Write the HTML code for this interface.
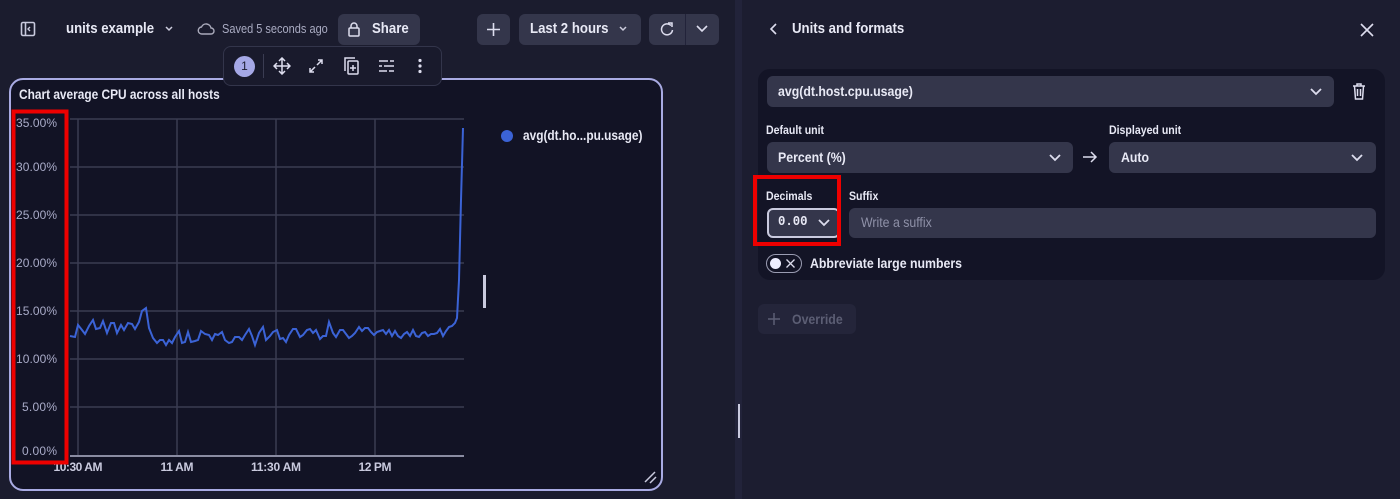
<!DOCTYPE html>
<html><head><meta charset="utf-8"><style>
*{box-sizing:border-box;margin:0;padding:0}
body{width:1400px;height:499px;background:#1b1c2e;font-family:"Liberation Sans",sans-serif;color:#e8e9f5;position:relative;overflow:hidden;font-weight:bold}
.a{position:absolute}
.btn{position:absolute;background:#34364b;border-radius:6px}
.t{position:absolute;white-space:nowrap;transform:scaleX(0.88);transform-origin:left center}
svg{position:absolute}
</style></head><body>
<!-- top bar -->
<svg style="left:20px;top:21px" width="16" height="16" viewBox="0 0 16 16"><rect x="1.5" y="1.5" width="13" height="13" rx="1.5" fill="none" stroke="#c9cade" stroke-width="1.6"/><line x1="5.5" y1="2" x2="5.5" y2="14" stroke="#c9cade" stroke-width="1.6"/><path d="M10 6l-2 2 2 2" fill="none" stroke="#c9cade" stroke-width="1.4"/></svg>
<div class="t" style="left:66px;top:20px;font-size:15px">units example</div>
<svg style="left:164px;top:25px" width="10" height="8" viewBox="0 0 10 8"><path d="M2 2l3 3 3-3" fill="none" stroke="#ccd" stroke-width="1.5"/></svg>
<svg style="left:197px;top:22px" width="18" height="14" viewBox="0 0 18 14"><path d="M5 12h9a3 3 0 0 0 0-6 5 5 0 0 0-9.5-1A3.5 3.5 0 0 0 5 12z" fill="none" stroke="#aab" stroke-width="1.4"/></svg>
<div class="t" style="left:222px;top:22px;font-size:12.5px;color:#a9abc2;font-weight:normal">Saved 5 seconds ago</div>
<div class="btn" style="left:338px;top:14px;width:82px;height:31px"></div>
<svg style="left:347px;top:22px" width="14" height="15" viewBox="0 0 14 15"><rect x="2" y="6" width="10" height="8" rx="1" fill="none" stroke="#dde" stroke-width="1.5"/><path d="M4 6V4a3 3 0 0 1 6 0v2" fill="none" stroke="#dde" stroke-width="1.5"/></svg>
<div class="t" style="left:372px;top:20px;font-size:15px">Share</div>
<div class="btn" style="left:477px;top:14px;width:33px;height:31px"></div>
<svg style="left:486px;top:22px" width="15" height="15" viewBox="0 0 15 15"><path d="M7.5 1v13M1 7.5h13" stroke="#dde" stroke-width="1.6"/></svg>
<div class="btn" style="left:519px;top:14px;width:122px;height:31px"></div>
<div class="t" style="left:530px;top:20px;font-size:15px">Last 2 hours</div>
<svg style="left:618px;top:25px" width="10" height="8" viewBox="0 0 10 8"><path d="M2 2l3 3 3-3" fill="none" stroke="#ccd" stroke-width="1.5"/></svg>
<div class="btn" style="left:649px;top:14px;width:70px;height:31px"></div>
<div class="a" style="left:685px;top:14px;width:1px;height:31px;background:#22233a"></div>
<svg style="left:659px;top:21px" width="16" height="16" viewBox="0 0 16 16"><path d="M12 4.5A5.5 5.5 0 1 0 13.5 9" fill="none" stroke="#dde" stroke-width="1.5"/><path d="M9 2h4v4" fill="none" stroke="#dde" stroke-width="1.5"/></svg>
<svg style="left:695px;top:24px" width="14" height="10" viewBox="0 0 14 10"><path d="M2 2l5 5 5-5" fill="none" stroke="#dde" stroke-width="1.6"/></svg>

<!-- chart card -->
<div class="a" style="left:9px;top:78px;width:654px;height:413px;border:2px solid #a9abe3;border-radius:14px;background:#121325"></div>
<div class="t" style="left:19px;top:87px;font-size:13.5px">Chart average CPU across all hosts</div>
<!-- toolbar -->
<div class="a" style="left:223px;top:46px;width:219px;height:40px;background:#191a2c;border:1px solid #33354b;border-radius:8px"></div>
<div class="a" style="left:234px;top:56px;width:21px;height:21px;border-radius:50%;background:#a5a8e6;color:#1b1c2e;font-size:12px;text-align:center;line-height:21px;font-weight:normal">1</div>
<div class="a" style="left:263px;top:54px;width:1px;height:24px;background:#3a3c52"></div>
<svg style="left:273px;top:57px" width="18" height="18" viewBox="0 0 18 18" fill="none" stroke="#dde" stroke-width="1.5"><path d="M9 1v16M1 9h16M6 4l3-3 3 3M6 14l3 3 3-3M4 6L1 9l3 3M14 6l3 3-3 3"/></svg>
<svg style="left:308px;top:58px" width="16" height="16" viewBox="0 0 16 16" fill="none" stroke="#dde" stroke-width="1.5"><path d="M10 2h4v4M14 2L9 7M6 14H2v-4M2 14l5-5"/></svg>
<svg style="left:343px;top:57px" width="17" height="18" viewBox="0 0 17 18" fill="none" stroke="#dde" stroke-width="1.5"><rect x="5" y="4" width="10" height="13" rx="1"/><path d="M2 14V1h10M10 8v6M7 11h6"/></svg>
<svg style="left:378px;top:58px" width="17" height="16" viewBox="0 0 17 16" fill="none" stroke="#dde" stroke-width="1.5"><path d="M1 3h15M1 8h15M1 13h15"/><path d="M11 1v4M5 6v4M10 11v4" stroke="#191a2c" stroke-width="2"/></svg>
<svg style="left:417px;top:58px" width="6" height="16" viewBox="0 0 6 16" fill="#dde"><circle cx="3" cy="2.5" r="1.6"/><circle cx="3" cy="8" r="1.6"/><circle cx="3" cy="13.5" r="1.6"/></svg>

<svg style="left:0;top:0" width="700" height="499">
<g stroke="#3a3c52" stroke-width="1.5">
<line x1="70" y1="119" x2="464" y2="119"/><line x1="70" y1="167" x2="464" y2="167"/><line x1="70" y1="215" x2="464" y2="215"/><line x1="70" y1="263" x2="464" y2="263"/><line x1="70" y1="311" x2="464" y2="311"/><line x1="70" y1="359" x2="464" y2="359"/><line x1="70" y1="407" x2="464" y2="407"/>
<line x1="78" y1="119" x2="78" y2="456"/><line x1="177" y1="119" x2="177" y2="456"/><line x1="276" y1="119" x2="276" y2="456"/><line x1="375" y1="119" x2="375" y2="456"/>
</g>
<line x1="70" y1="456" x2="464" y2="456" stroke="#8a8ca2" stroke-width="2"/>
<polyline fill="none" stroke="#3b63d6" stroke-width="2" points="70,336 75,337 78,325 82,330 85,334 89,326 93,320 96,329 100,328 103,321 107,333 111,323 114,323 117,333 121,325 124,330 128,323 132,324 135,329 139,322 142,311 146,308 149,328 153,338 157,343 160,340 163,340 166,345 169,340 172,343 175,337 179,331 182,343 185,342 188,332 191,342 195,341 198,340 201,331 205,334 209,335 212,340 215,334 218,335 222,332 225,340 229,343 232,342 235,337 239,337 242,340 245,335 249,329 252,336 255,345 259,333 263,327 266,340 270,336 273,332 277,330 280,339 283,338 286,342 289,335 293,329 296,329 300,337 303,335 307,330 310,329 313,333 316,330 320,339 323,336 326,336 329,322 333,333 336,337 340,330 343,330 346,334 349,338 352,336 355,333 359,327 362,331 365,328 368,328 371,332 374,335 377,332 380,331 383,330 386,334 389,330 392,336 395,331 398,336 401,338 404,334 407,332 410,336 413,330 416,336 419,337 422,333 425,332 428,336 431,334 434,334 437,333 440,329 443,336 446,331 449,327 452,326 455,323 457,318 459,280 461,200 463,128"/>
<g fill="#a9abc8" font-family="Liberation Sans,sans-serif" font-size="12" font-weight="normal" text-anchor="end">
<text x="57" y="127" textLength="41">35.00%</text><text x="57" y="171" textLength="41">30.00%</text><text x="57" y="219" textLength="41">25.00%</text><text x="57" y="267" textLength="41">20.00%</text><text x="57" y="315" textLength="41">15.00%</text><text x="57" y="363" textLength="41">10.00%</text><text x="57" y="411" textLength="35">5.00%</text><text x="57" y="455" textLength="35">0.00%</text>
</g>
<g fill="#c9cade" font-family="Liberation Sans,sans-serif" font-size="12" font-weight="bold" text-anchor="middle">
<text x="78" y="471" textLength="49">10:30 AM</text><text x="177" y="471" textLength="33">11 AM</text><text x="276" y="471" textLength="50">11:30 AM</text><text x="375" y="471" textLength="33">12 PM</text>
</g>
<rect x="13.5" y="111.5" width="53" height="351" fill="none" stroke="#e00" stroke-width="4"/>
<circle cx="507" cy="136" r="6" fill="#3b63d6"/>
<rect x="483" y="275" width="3" height="33" fill="#c9cade"/>
<path d="M645 482l10-10M650 483l6-6" stroke="#c9cade" stroke-width="1.5"/>
</svg>
<div class="t" style="left:523px;top:128px;font-size:13.5px">avg(dt.ho...pu.usage)</div>

<!-- divider -->
<div class="a" style="left:735px;top:0;width:7px;height:499px;background:#22233a"></div>
<div class="a" style="left:738px;top:404px;width:2px;height:34px;background:#c9cade"></div>

<!-- right panel -->
<div class="a" style="left:742px;top:0;width:658px;height:499px;background:#1c1d30"></div>
<svg style="left:768px;top:22px" width="12" height="14" viewBox="0 0 12 14"><path d="M8 2L3 7l5 5" fill="none" stroke="#dde" stroke-width="1.6"/></svg>
<div class="t" style="left:792px;top:20px;font-size:15px">Units and formats</div>
<svg style="left:1360px;top:23px" width="14" height="14" viewBox="0 0 14 14"><path d="M1 1l12 12M13 1L1 13" stroke="#dde" stroke-width="1.6"/></svg>
<div class="a" style="left:758px;top:69px;width:627px;height:211px;background:#131426;border-radius:12px"></div>
<div class="btn" style="left:767px;top:76px;width:567px;height:31px"></div>
<div class="t" style="left:778px;top:83px;font-size:14px">avg(dt.host.cpu.usage)</div>
<svg style="left:1309px;top:87px" width="14" height="10" viewBox="0 0 14 10"><path d="M2 2l5 5 5-5" fill="none" stroke="#dde" stroke-width="1.8"/></svg>
<svg style="left:1352px;top:83px" width="14" height="17" viewBox="0 0 14 17" fill="none" stroke="#dde" stroke-width="1.5"><path d="M1 3h12M5 3V1h4v2M2.5 3l1 13h7l1-13M5.5 6v7M8.5 6v7"/></svg>
<div class="t" style="left:766px;top:123px;font-size:12px">Default unit</div>
<div class="t" style="left:1109px;top:123px;font-size:12px">Displayed unit</div>
<div class="btn" style="left:767px;top:142px;width:306px;height:31px"></div>
<div class="t" style="left:778px;top:149px;font-size:14px">Percent (%)</div>
<svg style="left:1048px;top:153px" width="14" height="10" viewBox="0 0 14 10"><path d="M2 2l5 5 5-5" fill="none" stroke="#dde" stroke-width="1.8"/></svg>
<svg style="left:1082px;top:150px" width="16" height="14" viewBox="0 0 16 14"><path d="M1 7h13M9 2l5 5-5 5" fill="none" stroke="#dde" stroke-width="1.5"/></svg>
<div class="btn" style="left:1109px;top:142px;width:267px;height:31px"></div>
<div class="t" style="left:1121px;top:149px;font-size:14px">Auto</div>
<svg style="left:1350px;top:153px" width="14" height="10" viewBox="0 0 14 10"><path d="M2 2l5 5 5-5" fill="none" stroke="#dde" stroke-width="1.8"/></svg>
<div class="t" style="left:766px;top:189px;font-size:12px">Decimals</div>
<div class="t" style="left:849px;top:189px;font-size:12px">Suffix</div>
<div class="a" style="left:767px;top:208px;width:73px;height:30px;background:#34364b;border:2px solid #c9cade;border-radius:6px"></div>
<div class="t" style="left:778px;top:214px;font-size:14px;font-family:'Liberation Mono',monospace">0.00</div>
<svg style="left:817px;top:218px" width="14" height="10" viewBox="0 0 14 10"><path d="M2 2l5 5 5-5" fill="none" stroke="#dde" stroke-width="1.8"/></svg>
<div class="btn" style="left:849px;top:208px;width:527px;height:30px"></div>
<div class="t" style="left:861px;top:214px;font-size:14px;color:#8f91a8;font-weight:normal">Write a suffix</div>
<div class="a" style="left:753px;top:175px;width:88px;height:71px;border:4px solid #e00"></div>
<div class="a" style="left:766px;top:254px;width:36px;height:19px;border:1.5px solid #9a9cb2;border-radius:10px"></div>
<div class="a" style="left:770px;top:258px;width:11px;height:11px;border-radius:50%;background:#eef"></div>
<svg style="left:785px;top:258px" width="11" height="11" viewBox="0 0 11 11"><path d="M1.5 1.5l8 8M9.5 1.5l-8 8" stroke="#dde" stroke-width="1.3"/></svg>
<div class="t" style="left:810px;top:255px;font-size:14px">Abbreviate large numbers</div>
<div class="a" style="left:758px;top:304px;width:98px;height:30px;background:#24253a;border-radius:6px"></div>
<svg style="left:767px;top:312px" width="14" height="14" viewBox="0 0 14 14"><path d="M7 1v12M1 7h12" stroke="#5c5e74" stroke-width="1.5"/></svg>
<div class="t" style="left:792px;top:311px;font-size:14px;color:#5c5e74">Override</div>
</body></html>
